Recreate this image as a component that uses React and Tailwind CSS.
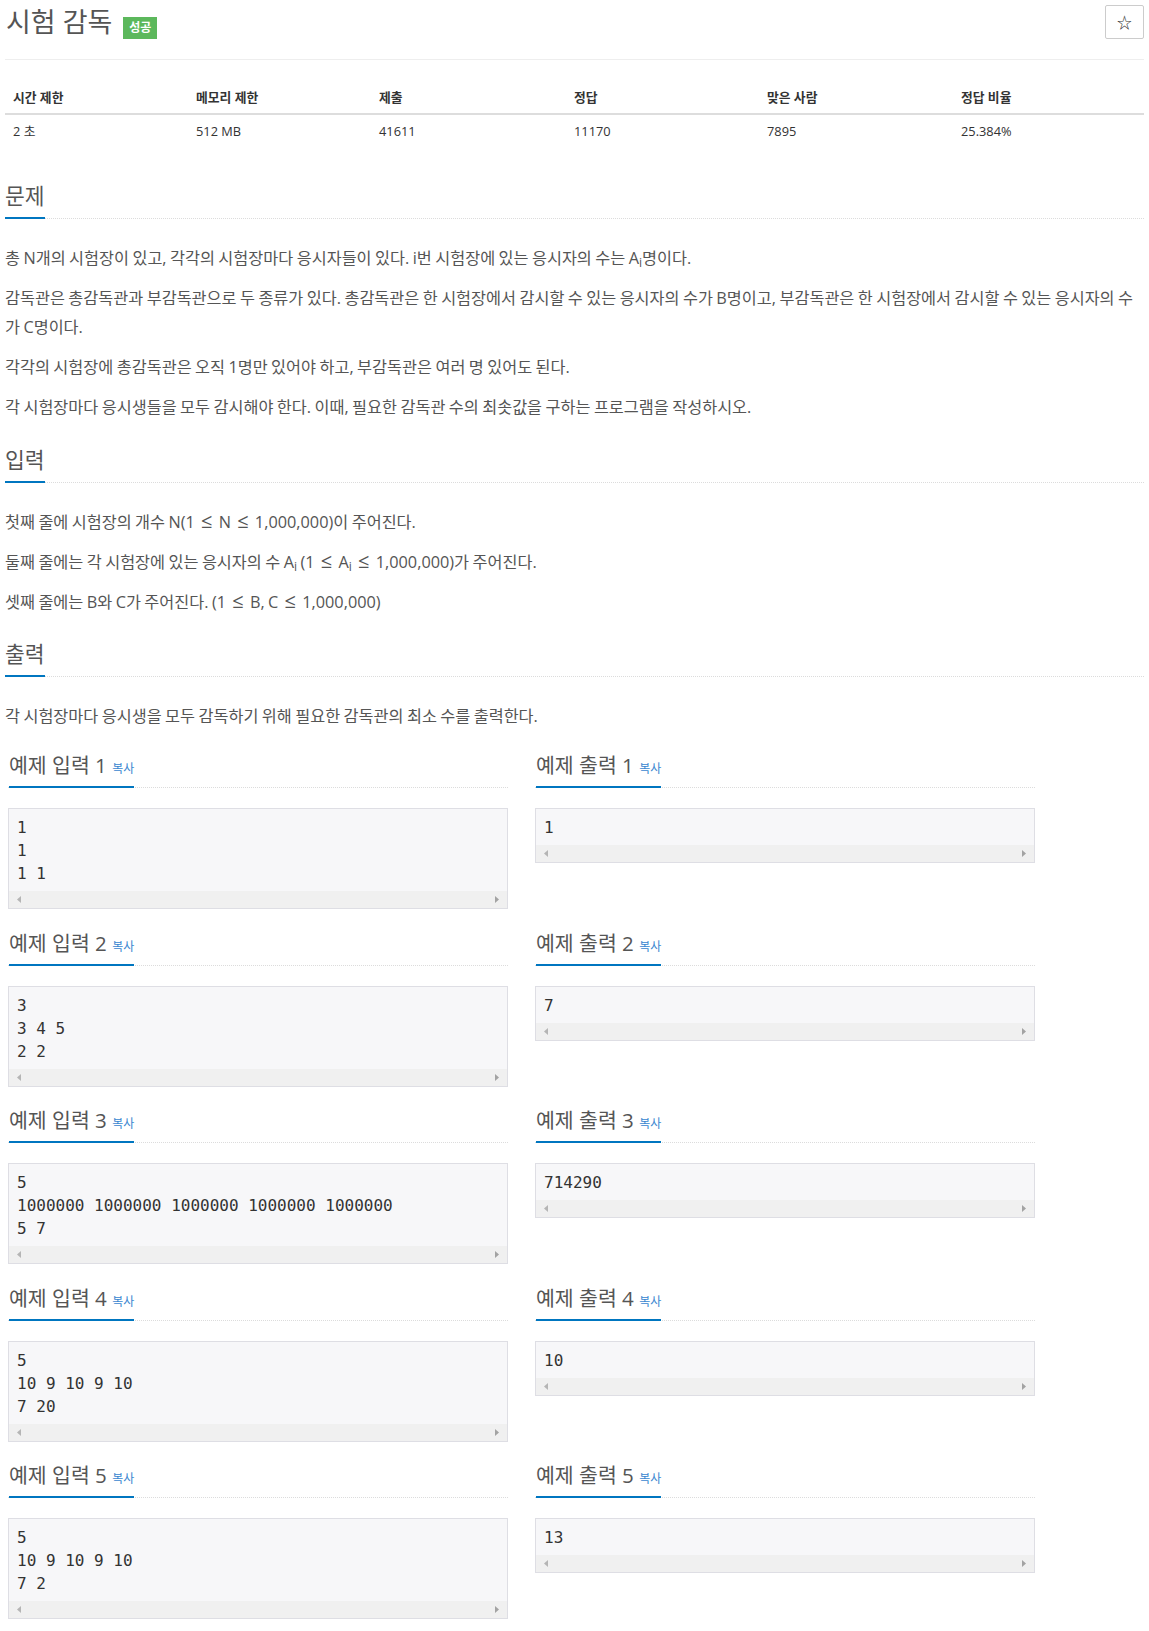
import React from 'react';

const samples = [
    { input: '1\n1\n1 1', output: '1' },
    { input: '3\n3 4 5\n2 2', output: '7' },
    { input: '5\n1000000 1000000 1000000 1000000 1000000\n5 7', output: '714290' },
    { input: '5\n10 9 10 9 10\n7 20', output: '10' },
    { input: '5\n10 9 10 9 10\n7 2', output: '13' },
];

const stats = [
    ['시간 제한', '2 초'],
    ['메모리 제한', '512 MB'],
    ['제출', '41611'],
    ['정답', '11170'],
    ['맞은 사람', '7895'],
    ['정답 비율', '25.384%'],
];

const Headline = ({ children, className }) => (
    <div className={`flex border-b border-dotted border-[#dcdcdc] ${className}`}>
        <h2 className="-mb-px border-b-2 border-[#0076c0] pb-[9px] text-[21.5px] leading-[24px] font-normal text-[#555]">
            {children}
        </h2>
    </div>
);

const SampleHeader = ({ label }) => (
    <div className="flex border-b border-dotted border-[#dcdcdc]">
        <h2 className="-mb-px ml-px border-b-2 border-[#0076c0] pb-[5px] text-[20.5px] leading-[24px] font-normal text-[#555]">
            {label} <span className="text-[12px] text-[#3a87d0]">복사</span>
        </h2>
    </div>
);

// fake horizontal scrollbar under each sample box
const ScrollBar = () => (
    <div className="flex h-[17px] items-center justify-between bg-[#f0f0f0] px-[8px]">
        <svg width="4" height="7" viewBox="0 0 4 7"><path d="M4 0V7L0 3.5Z" fill="#b5b5b5" /></svg>
        <svg width="4" height="7" viewBox="0 0 4 7"><path d="M0 0V7L4 3.5Z" fill="#a3a3a3" /></svg>
    </div>
);

const SampleBox = ({ text }) => (
    <div className="border border-[#dedee4] bg-[#f7f7f9]">
        <pre className="px-[8px] pt-[7px] pb-[6px] font-['DejaVu_Sans_Mono',monospace] text-[16px] leading-[23px] text-[#333]">
            {text}
        </pre>
        <ScrollBar />
    </div>
);

const P = ({ children }) => (
    <p className="mb-[11px] text-[16.3px] leading-[29px] text-[#555] [word-spacing:-0.8px]">{children}</p>
);

// the less-or-equal sign is drawn wider in the original
const Le = () => <span className="inline-block w-[17px] text-center text-[20px] leading-none">≤</span>;

export default function App() {
    return (
        <div className="min-h-[1631px] bg-white px-[5px] font-['Open_Sans','Noto_Sans_CJK_KR',sans-serif]">
            {/* title bar */}
            <div className="flex h-[60px] items-start justify-between border-b border-[#eee]">
                <div className="flex items-start pt-[5px]">
                    <h1 className="pl-px text-[27px] leading-[34px] font-normal text-[#555]">시험 감독</h1>
                    <span className="ml-[11px] mt-[12px] flex h-[22px] w-[34px] items-center justify-center bg-[#5cb85c] text-[12px] font-bold text-white">
                        성공
                    </span>
                </div>
                <button className="mt-[5px] flex h-[34px] w-[39px] items-center justify-center rounded-[2px] border border-[#ccc] bg-white text-[15px] text-[#333]">
                    ☆
                </button>
            </div>

            {/* stats table */}
            <div className="mt-[21px]">
                <div className="grid grid-cols-[183px_183px_195px_193px_194px_1fr] border-b-2 border-[#ddd]">
                    {stats.map(([h]) => (
                        <div key={h} className="py-[7px] pl-[8px] text-[12.8px] leading-[18px] font-bold text-[#333]">{h}</div>
                    ))}
                </div>
                <div className="grid grid-cols-[183px_183px_195px_193px_194px_1fr]">
                    {stats.map(([h, v]) => (
                        <div key={h} className="py-[7px] pl-[8px] text-[12.8px] leading-[18px] text-[#333]">{v}</div>
                    ))}
                </div>
            </div>

            <Headline className="mt-[37px] mb-[25px]">문제</Headline>
            <P>총 N개의 시험장이 있고, 각각의 시험장마다 응시자들이 있다. i번 시험장에 있는 응시자의 수는 A<sub>i</sub>명이다.</P>
            <P>감독관은 총감독관과 부감독관으로 두 종류가 있다. 총감독관은 한 시험장에서 감시할 수 있는 응시자의 수가 B명이고, 부감독관은 한 시험장에서 감시할 수 있는 응시자의 수가 C명이다.</P>
            <P>각각의 시험장에 총감독관은 오직 1명만 있어야 하고, 부감독관은 여러 명 있어도 된다.</P>
            <P>각 시험장마다 응시생들을 모두 감시해야 한다. 이때, 필요한 감독관 수의 최솟값을 구하는 프로그램을 작성하시오.</P>

            <Headline className="mt-[26px] mb-[25px]">입력</Headline>
            <P>첫째 줄에 시험장의 개수 N(1 <Le /> N <Le /> 1,000,000)이 주어진다.</P>
            <P>둘째 줄에는 각 시험장에 있는 응시자의 수 A<sub>i</sub> (1 <Le /> A<sub>i</sub> <Le /> 1,000,000)가 주어진다.</P>
            <P>셋째 줄에는 B와 C가 주어진다. (1 <Le /> B, C <Le /> 1,000,000)</P>

            <Headline className="mt-[25px] mb-[25px]">출력</Headline>
            <P>각 시험장마다 응시생을 모두 감독하기 위해 필요한 감독관의 최소 수를 출력한다.</P>

            {/* samples */}
            <div className="ml-[3px] mt-[22px] flex flex-col gap-[21.5px]">
                {samples.map((s, i) => (
                    <div key={i} className="grid w-[1027px] grid-cols-[500px_500px] items-start gap-x-[27px]">
                        <div>
                            <SampleHeader label={`예제 입력 ${i + 1}`} />
                            <div className="mt-[20px]"><SampleBox text={s.input} /></div>
                        </div>
                        <div>
                            <SampleHeader label={`예제 출력 ${i + 1}`} />
                            <div className="mt-[20px]"><SampleBox text={s.output} /></div>
                        </div>
                    </div>
                ))}
            </div>
        </div>
    );
}
